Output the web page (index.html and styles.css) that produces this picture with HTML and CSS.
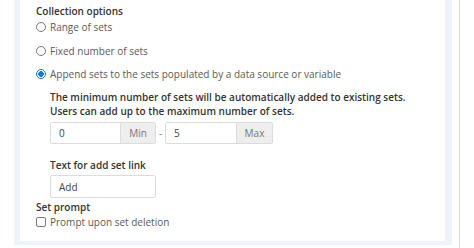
FILE: index.html
```html
<!DOCTYPE html>
<html>
<head>
<meta charset="utf-8">
<link rel="stylesheet" href="styles.css">
</head>
<body>
<div class="page">
  <div class="frame">
    <div class="card">
      <div class="title">Collection options</div>
      <div class="radios">
        <label class="radio-row"><span class="radio"></span><span class="rlabel">Range of sets</span></label>
        <label class="radio-row"><span class="radio"></span><span class="rlabel">Fixed number of sets</span></label>
        <label class="radio-row"><span class="radio checked"></span><span class="rlabel">Append sets to the sets populated by a data source or variable</span></label>
      </div>
      <div class="indent">
        <div class="desc">The minimum number of sets will be automatically added to existing sets.<br>Users can add up to the maximum number of sets.</div>
        <div class="range">
          <div class="group"><div class="field w70">0</div><div class="addon w36">Min</div></div>
          <span class="dash">-</span>
          <div class="group"><div class="field w71">5</div><div class="addon w37">Max</div></div>
        </div>
        <div class="sub">Text for add set link</div>
        <div class="field single">Add</div>
      </div>
      <div class="title prompt">Set prompt</div>
      <label class="check-row"><span class="checkbox"></span><span class="rlabel">Prompt upon set deletion</span></label>
    </div>
  </div>
  <div class="gap"></div>
  <div class="divider"></div>
</div>
</body>
</html>
```
FILE: styles.css
```css
* { box-sizing: border-box; }
html, body { margin: 0; padding: 0; background: #fff; }
body {
  font-family: "Open Sans", "Liberation Sans", sans-serif;
  font-size: 10px;
  color: #333;
  width: 474px;
  height: 248px;
  overflow: hidden;
}
.page {
  display: flex;
  height: 248px;
  padding-left: 14px;
}
.frame {
  width: 438px;
  height: 245px;
  background: #eef3fb;
  padding: 0 7px 4px 6px;
}
.card {
  background: #fff;
  height: 241px;
  padding: 4px 16px 0;
  display: flex;
  flex-direction: column;
  align-items: flex-start;
}
.title {
  font-weight: 600;
  line-height: 14px;
  height: 14px;
  color: #333;
}
.radios {
  display: flex;
  flex-direction: column;
  gap: 5.5px;
}
.radio-row, .check-row {
  display: flex;
  align-items: center;
  height: 18px;
  color: #5a5a5a;
}
.radio {
  width: 10px;
  height: 10px;
  border: 1px solid #7a7a7a;
  border-radius: 50%;
  margin-right: 4px;
  background: #fff;
  flex: none;
}
.radio.checked {
  border-color: #1a73e8;
  background: radial-gradient(circle, #1a73e8 0 2.6px, #fff 3px);
}
.rlabel { line-height: 14px; }
.indent {
  padding-left: 14px;
  display: flex;
  flex-direction: column;
  align-items: flex-start;
}
.desc {
  margin-top: 7px;
  font-weight: 600;
  line-height: 14px;
  color: #333;
}
.range {
  margin-top: 4px;
  display: flex;
  align-items: center;
  height: 22px;
}
.group {
  display: flex;
  height: 22px;
  border: 1px solid #dcdcdc;
  border-radius: 2px;
}
.field {
  height: 100%;
  display: flex;
  align-items: center;
  padding-left: 8px;
  color: #444;
  background: #fff;
}
.addon {
  height: 100%;
  display: flex;
  align-items: center;
  justify-content: center;
  background: #eeeeee;
  border-left: 1px solid #dcdcdc;
  color: #777;
}
.w70 { width: 69px; }
.w71 { width: 70px; }
.w36 { width: 35px; }
.w37 { width: 36px; }
.dash {
  width: 9px;
  text-align: center;
  color: #777;
}
.sub {
  margin-top: 14px;
  font-weight: 600;
  line-height: 14px;
  color: #333;
}
.field.single {
  margin-top: 3px;
  width: 106px;
  height: 23px;
  border: 1px solid #dcdcdc;
  border-radius: 2px;
}
.prompt { margin-top: 2px; }
.check-row {
  margin-top: 1px;
  height: 14px;
}
.checkbox {
  width: 10px;
  height: 10px;
  border: 1px solid #7a7a7a;
  border-radius: 2px;
  margin-right: 4px;
  flex: none;
}
.gap { width: 7px; }
.divider {
  width: 1px;
  height: 248px;
  background: #d8d8d8;
}
```
